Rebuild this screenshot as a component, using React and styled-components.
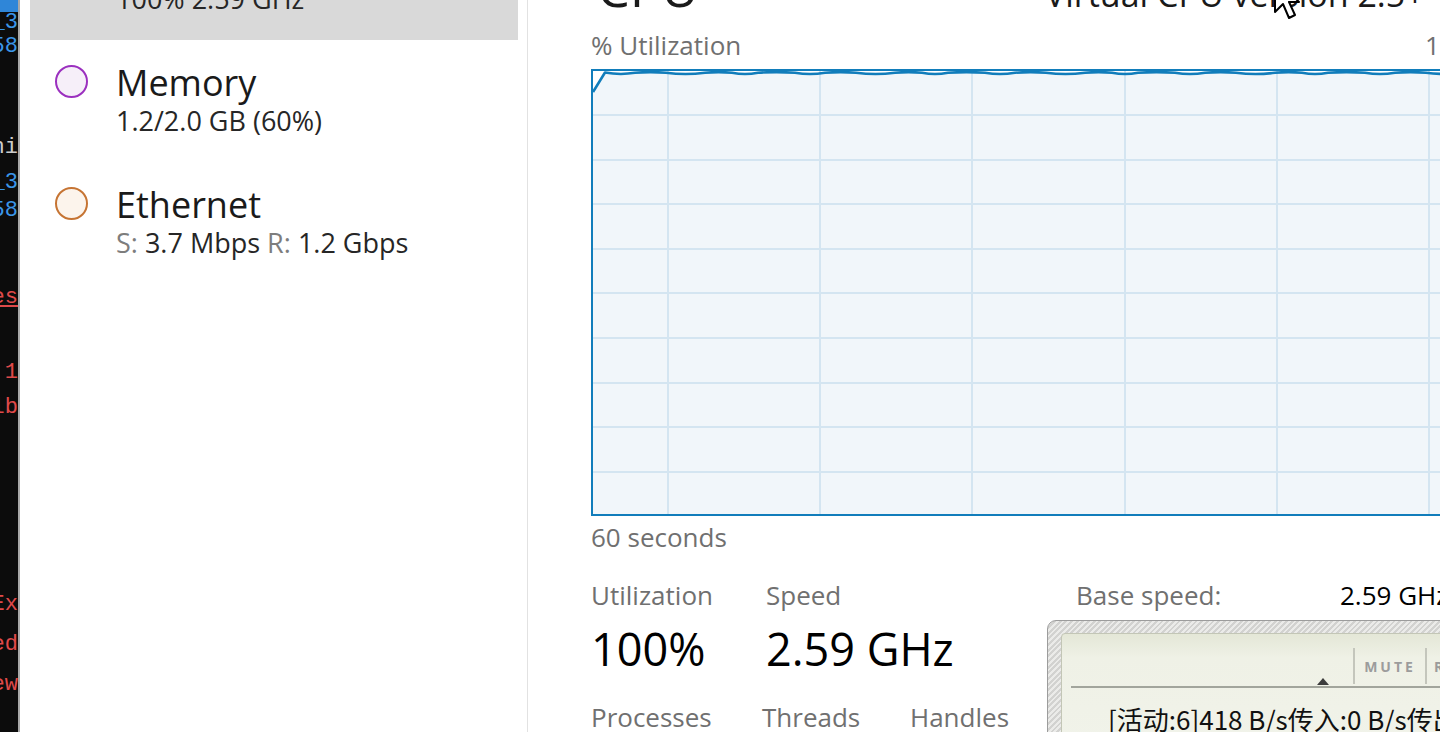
import React from "react";
import styled, { createGlobalStyle } from "styled-components";

const GlobalStyle = createGlobalStyle`
  html, body {
    margin: 0;
    padding: 0;
    background: #fff;
    overflow: hidden;
  }
  body {
    font-family: "Open Sans", "Noto Sans", sans-serif;
  }
`;

const Screen = styled.div`
  position: relative;
  display: flex;
  width: 1440px;
  height: 732px;
  overflow: hidden;
  background: #fff;
`;

/* console window peeking in on the left */
const Terminal = styled.div`
  flex: 0 0 18px;
  background: #0c0c0c;
  border-right: 2px solid #a9a9a9;
  overflow: hidden;
  display: flex;
  flex-direction: column;
  font-family: "Liberation Mono", monospace;
  font-size: 22px;
`;

const TermBar = styled.div`
  flex: 0 0 12px;
  background: #2f86d8;
`;

const TermLine = styled.div`
  flex: 0 0 26px;
  margin-top: ${(p) => p.$gap}px;
  line-height: 26px;
  white-space: nowrap;
  display: flex;
  justify-content: flex-end;
  color: ${(p) => p.$color};
  text-decoration: ${(p) => (p.$underline ? "underline" : "none")};
`;

const Sidebar = styled.nav`
  flex: 0 0 488px;
  padding: 0 9px 0 10px;
  border-right: 1px solid #e2e2e2;
`;

const NavList = styled.div`
  margin-top: -82px;
  display: flex;
  flex-direction: column;
`;

const NavItem = styled.div`
  display: flex;
  align-items: flex-start;
  gap: 28px;
  padding: 23px 0 25px 25px;
  background: ${(p) => (p.$selected ? "#d9d9d9" : "transparent")};
`;

const Dot = styled.span`
  flex: 0 0 33px;
  height: 33px;
  margin-top: 2px;
  box-sizing: border-box;
  border-radius: 50%;
  border: 2px solid ${(p) => p.$stroke};
  background: ${(p) => p.$fill};
`;

const NavText = styled.div`
  display: flex;
  flex-direction: column;
  gap: 2px;
`;

const NavTitle = styled.div`
  font-size: 36px;
  line-height: 40px;
  color: #1a1a1a;
`;

const NavSub = styled.div`
  font-size: 27px;
  line-height: 32px;
  color: #262626;
  white-space: nowrap;
`;

const Dim = styled.span`
  color: #7d7d7d;
`;

const Main = styled.main`
  flex: 0 0 900px;
  padding-left: 63px;
  display: flex;
  flex-direction: column;
`;

const Header = styled.header`
  margin-top: -43px;
  height: 60px;
  display: flex;
  align-items: baseline;
  white-space: nowrap;
`;

const PageTitle = styled.h1`
  margin: 0;
  flex: 0 0 448px;
  padding-left: 6px;
  font-size: 52px;
  line-height: 60px;
  font-weight: 400;
  color: #1a1a1a;
`;

const ModelName = styled.div`
  font-size: 34px;
  color: #1a1a1a;
`;

const Caption = styled.div`
  display: flex;
  justify-content: space-between;
  margin-top: ${(p) => p.$gap}px;
  font-size: 26px;
  line-height: 30px;
  color: #707070;
`;

const Chart = styled.div`
  margin-top: 9px;
  height: 447px;
  box-sizing: border-box;
  border: 2px solid #117dbb;
  background: #fff;
  svg {
    display: block;
  }
`;

const Stats = styled.section`
  margin-top: 28px;
  display: flex;
`;

const StatsLeft = styled.div`
  flex: 0 0 485px;
  display: flex;
  flex-direction: column;
`;

const StatRow = styled.div`
  display: flex;
  margin-top: ${(p) => p.$gap || 0}px;
`;

const Stat = styled.div`
  flex: 0 0 ${(p) => p.$w}px;
  display: flex;
  flex-direction: column;
`;

const Label = styled.div`
  font-size: 26px;
  line-height: 30px;
  color: #707070;
  white-space: nowrap;
`;

const Value = styled.div`
  margin-top: 13px;
  font-size: 45px;
  line-height: 52px;
  color: #000;
  white-space: nowrap;
`;

const InfoRow = styled.div`
  display: flex;
  font-size: 26px;
  line-height: 30px;
  white-space: nowrap;
`;

const InfoKey = styled.span`
  flex: 0 0 264px;
  color: #707070;
`;

const InfoVal = styled.span`
  color: #000;
`;

/* floating net-speed widget over the bottom right corner */
const Widget = styled.div`
  position: absolute;
  left: 1047px;
  top: 620px;
  width: 430px;
  height: 140px;
  box-sizing: border-box;
  padding: 12px 0 0 13px;
  border: 1px solid #9c9c9c;
  border-radius: 9px 0 0 0;
  background: repeating-linear-gradient(
    135deg,
    #d2d2d0 0 2px,
    #ebebe9 2px 4px
  );
`;

const WidgetBody = styled.div`
  height: 100%;
  box-sizing: border-box;
  border: 1px solid #c3c6b6;
  border-radius: 4px 0 0 0;
  background: linear-gradient(#e4e7d7, #eff1e6 24px, #f1f3ea);
`;

const WidgetHead = styled.div`
  margin-left: 9px;
  height: 52px;
  border-bottom: 2px solid #a2a59c;
  display: flex;
  align-items: flex-end;
`;

const SortCell = styled.div`
  flex: 0 0 282px;
  height: 100%;
  display: flex;
  align-items: flex-end;
  justify-content: flex-end;
  padding-right: 24px;
  box-sizing: border-box;
`;

const SortArrow = styled.span`
  width: 0;
  height: 0;
  margin-bottom: 1px;
  border-left: 6px solid transparent;
  border-right: 6px solid transparent;
  border-bottom: 7px solid #3d3d3d;
`;

const HeadCell = styled.div`
  flex: 0 0 ${(p) => p.$w}px;
  height: 36px;
  margin-bottom: 2px;
  box-sizing: border-box;
  padding-left: ${(p) => (p.$left ? 7 : 0)}px;
  border-left: 2px solid #c4c6bc;
  display: flex;
  align-items: center;
  justify-content: ${(p) => (p.$left ? "flex-start" : "center")};
  font-size: 14px;
  font-weight: 700;
  letter-spacing: 3px;
  color: #9c9c9c;
`;

const WidgetLine = styled.div`
  margin: 14px 0 0 46px;
  font-family: "Noto Sans CJK SC", "Noto Sans", sans-serif;
  font-size: 26px;
  line-height: 34px;
  color: #111;
  white-space: nowrap;
`;

const Cursor = styled.svg`
  position: absolute;
  left: 1274px;
  top: -23px;
`;

const termLines = [
  { gap: -2, text: "_3", color: "#3b96e8" },
  { gap: -2, text: "_58", color: "#3b96e8" },
  { gap: 75, text: "ni", color: "#cccccc" },
  { gap: 9, text: "_3", color: "#3b96e8" },
  { gap: 2, text: "_58", color: "#3b96e8" },
  { gap: 61, text: "es", color: "#e04a4a", underline: true },
  { gap: 49, text: "t 1", color: "#e04a4a" },
  { gap: 9, text: "lb", color: "#e04a4a" },
  { gap: 171, text: "Ex", color: "#e04a4a" },
  { gap: 14, text: "ed", color: "#e04a4a" },
  { gap: 14, text: "ew", color: "#e04a4a" },
];

const CHART_W = 896;
const CHART_H = 443;
const vLines = [75, 227, 379, 532, 684, 836];
const hLines = [44, 89, 133, 178, 222, 267, 312, 356, 401];

// 100% load: a line hugging the top edge with a soft ripple
function usagePath() {
  let d = "M0,21 L12,1.5";
  let x = 12;
  let up = true;
  while (x < CHART_W + 40) {
    const w = 22 + ((x * 7) % 19);
    d += ` Q${x + w / 2},${up ? 4.2 : 0.4} ${x + w},1.8`;
    x += w;
    up = !up;
  }
  return { d, end: x };
}

const CpuChart = () => {
  const { d, end } = usagePath();
  const area = `${d} L${end},${CHART_H} L0,${CHART_H} Z`;
  return (
    <Chart>
      <svg width={CHART_W} height={CHART_H}>
        <path d={area} fill="#f1f6fa" />
        {vLines.map((x) => (
          <line key={x} x1={x} x2={x} y1="0" y2={CHART_H} stroke="#d4e5f1" strokeWidth="2" />
        ))}
        {hLines.map((y) => (
          <line key={y} y1={y} y2={y} x1="0" x2={CHART_W} stroke="#d4e5f1" strokeWidth="2" />
        ))}
        <path d={d} fill="none" stroke="#117dbb" strokeWidth="2.6" strokeLinejoin="round" />
      </svg>
    </Chart>
  );
};

export default function App() {
  return (
    <Screen>
      <GlobalStyle />
      <Terminal>
        <TermBar />
        {termLines.map((l, i) => (
          <TermLine key={i} $gap={l.gap} $color={l.color} $underline={l.underline}>
            <span>{l.text}</span>
          </TermLine>
        ))}
      </Terminal>

      <Sidebar>
        <NavList>
          <NavItem $selected>
            <Dot $stroke="#117dbb" $fill="#f1f6fa" />
            <NavText>
              <NavTitle>CPU</NavTitle>
              <NavSub>100% 2.59 GHz</NavSub>
            </NavText>
          </NavItem>
          <NavItem>
            <Dot $stroke="#9b30bf" $fill="#f6eff9" />
            <NavText>
              <NavTitle>Memory</NavTitle>
              <NavSub>1.2/2.0 GB (60%)</NavSub>
            </NavText>
          </NavItem>
          <NavItem>
            <Dot $stroke="#c67433" $fill="#fcf4ec" />
            <NavText>
              <NavTitle>Ethernet</NavTitle>
              <NavSub>
                <Dim>S:</Dim> 3.7 Mbps <Dim>R:</Dim> 1.2 Gbps
              </NavSub>
            </NavText>
          </NavItem>
        </NavList>
      </Sidebar>

      <Main>
        <Header>
          <PageTitle>CPU</PageTitle>
          <ModelName>Virtual CPU version 2.5+</ModelName>
        </Header>
        <Caption $gap={13}>
          <span>% Utilization</span>
          <span>100%</span>
        </Caption>
        <CpuChart />
        <Caption $gap={6}>
          <span>60 seconds</span>
          <span>0</span>
        </Caption>
        <Stats>
          <StatsLeft>
            <StatRow>
              <Stat $w={175}>
                <Label>Utilization</Label>
                <Value>100%</Value>
              </Stat>
              <Stat $w={200}>
                <Label>Speed</Label>
                <Value>2.59 GHz</Value>
              </Stat>
            </StatRow>
            <StatRow $gap={27}>
              <Stat $w={171}>
                <Label>Processes</Label>
              </Stat>
              <Stat $w={148}>
                <Label>Threads</Label>
              </Stat>
              <Stat $w={140}>
                <Label>Handles</Label>
              </Stat>
            </StatRow>
          </StatsLeft>
          <div>
            <InfoRow>
              <InfoKey>Base speed:</InfoKey>
              <InfoVal>2.59 GHz</InfoVal>
            </InfoRow>
          </div>
        </Stats>
      </Main>

      <Widget>
        <WidgetBody>
          <WidgetHead>
            <SortCell>
              <SortArrow />
            </SortCell>
            <HeadCell $w={72}>MUTE</HeadCell>
            <HeadCell $w={72} $left>
              RX
            </HeadCell>
          </WidgetHead>
          <WidgetLine>[活动:6]418 B/s传入:0 B/s传出:0 B/s</WidgetLine>
        </WidgetBody>
      </Widget>

      <Cursor width="28" height="44" viewBox="0 0 28 44">
        <path
          d="M1 1 L1 35 L9 27 L15 41 L21 38 L15 25 L25 25 Z"
          fill="#fff"
          stroke="#000"
          strokeWidth="2"
          strokeLinejoin="round"
        />
      </Cursor>
    </Screen>
  );
}
